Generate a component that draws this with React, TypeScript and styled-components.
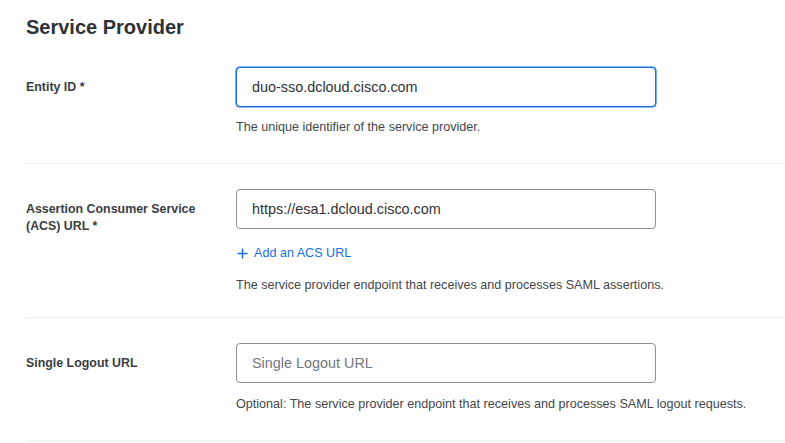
import React from 'react';
import styled, { createGlobalStyle } from 'styled-components';

const GlobalStyle = createGlobalStyle`
  html, body {
    margin: 0;
    padding: 0;
    background: #ffffff;
  }
  body {
    font-family: "Liberation Sans", Arial, Helvetica, sans-serif;
    color: #3a3d42;
  }
`;

const Page = styled.div`
  padding: 15px 0 0 26px;
`;

const Title = styled.h2`
  margin: 0 0 3px;
  font-size: 20px;
  line-height: 24px;
  font-weight: 700;
  color: #2e3238;
`;

const Section = styled.section<{ $tail: number }>`
  display: grid;
  grid-template-columns: 210px 1fr;
  padding: 25px 0 ${(p) => p.$tail}px;
  border-bottom: 1px solid #efefef;
`;

const Label = styled.label`
  padding-top: 12px;
  font-size: 12.4px;
  line-height: 17px;
  font-weight: 700;
  color: #3a3d42;
`;

const Field = styled.div`
  display: flex;
  flex-direction: column;
  align-items: flex-start;
`;

const Input = styled.input<{ $focused?: boolean }>`
  box-sizing: border-box;
  width: 420px;
  height: 40px;
  padding: 0 15px;
  border-radius: 4px;
  border: 1px solid ${(p) => (p.$focused ? '#1a6fe0' : '#8f9196')};
  box-shadow: ${(p) => (p.$focused ? '0 0 0 0.6px #1a6fe0' : 'none')};
  outline: none;
  font-family: "Liberation Sans", Arial, Helvetica, sans-serif;
  font-size: 14.4px;
  color: #2f3237;
  background: #fff;

  &::placeholder {
    color: #74777c;
  }
`;

const Help = styled.p<{ $gap: number }>`
  margin: ${(p) => p.$gap}px 0 0;
  font-size: 12.6px;
  line-height: 18px;
  color: #43474d;
  white-space: nowrap;
`;

const AddLink = styled.a`
  display: flex;
  align-items: center;
  gap: 6px;
  margin-top: 15px;
  padding-left: 1px;
  font-size: 12.6px;
  line-height: 18px;
  color: #1a6fe0;
  text-decoration: none;
  cursor: pointer;
`;

const PlusIcon = () => (
  <svg width="11" height="11" viewBox="0 0 11 11" aria-hidden="true">
    <path d="M5.5 0.5v10M0.5 5.5h10" stroke="#1a6fe0" strokeWidth="1.5" />
  </svg>
);

export default function App() {
  return (
    <>
      <GlobalStyle />
      <Page>
        <Title>Service Provider</Title>

        <Section $tail={27}>
          <Label>Entity ID *</Label>
          <Field>
            <Input $focused defaultValue="duo-sso.dcloud.cisco.com" />
            <Help $gap={11}>The unique identifier of the service provider.</Help>
          </Field>
        </Section>

        <Section $tail={23}>
          <Label>
            Assertion Consumer Service
            <br />
            (ACS) URL *
          </Label>
          <Field>
            <Input defaultValue="https://esa1.dcloud.cisco.com" />
            <AddLink>
              <PlusIcon />
              Add an ACS URL
            </AddLink>
            <Help $gap={14}>
              The service provider endpoint that receives and processes SAML assertions.
            </Help>
          </Field>
        </Section>

        <Section $tail={27}>
          <Label>Single Logout URL</Label>
          <Field>
            <Input placeholder="Single Logout URL" />
            <Help $gap={12}>
              Optional: The service provider endpoint that receives and processes SAML logout
              requests.
            </Help>
          </Field>
        </Section>
      </Page>
    </>
  );
}
